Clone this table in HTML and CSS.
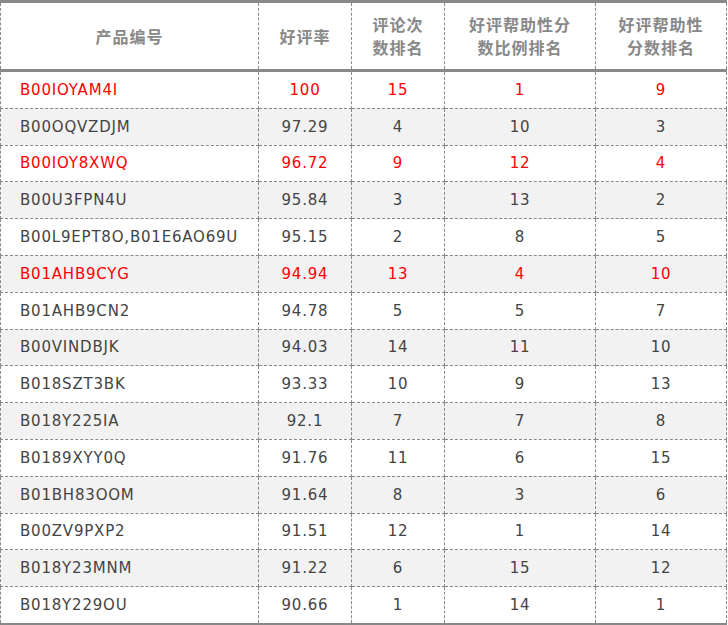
FILE: index.html
```html
<!DOCTYPE html>
<html>
<head>
<meta charset="utf-8">
<link rel="stylesheet" href="styles.css">
</head>
<body>
<table class="rank">
  <colgroup>
    <col class="c1"><col class="c2"><col class="c3"><col class="c4"><col class="c5">
  </colgroup>
  <thead>
    <tr>
      <th>产品编号</th>
      <th>好评率</th>
      <th>评论次<br>数排名</th>
      <th>好评帮助性分<br>数比例排名</th>
      <th>好评帮助性<br>分数排名</th>
    </tr>
  </thead>
  <tbody>
    <tr class="hl"><td>B00IOYAM4I</td><td>100</td><td>15</td><td>1</td><td>9</td></tr>
    <tr><td>B00OQVZDJM</td><td>97.29</td><td>4</td><td>10</td><td>3</td></tr>
    <tr class="hl"><td>B00IOY8XWQ</td><td>96.72</td><td>9</td><td>12</td><td>4</td></tr>
    <tr><td>B00U3FPN4U</td><td>95.84</td><td>3</td><td>13</td><td>2</td></tr>
    <tr><td>B00L9EPT8O,B01E6AO69U</td><td>95.15</td><td>2</td><td>8</td><td>5</td></tr>
    <tr class="hl"><td>B01AHB9CYG</td><td>94.94</td><td>13</td><td>4</td><td>10</td></tr>
    <tr><td>B01AHB9CN2</td><td>94.78</td><td>5</td><td>5</td><td>7</td></tr>
    <tr><td>B00VINDBJK</td><td>94.03</td><td>14</td><td>11</td><td>10</td></tr>
    <tr><td>B018SZT3BK</td><td>93.33</td><td>10</td><td>9</td><td>13</td></tr>
    <tr><td>B018Y225IA</td><td>92.1</td><td>7</td><td>7</td><td>8</td></tr>
    <tr><td>B0189XYY0Q</td><td>91.76</td><td>11</td><td>6</td><td>15</td></tr>
    <tr><td>B01BH83OOM</td><td>91.64</td><td>8</td><td>3</td><td>6</td></tr>
    <tr><td>B00ZV9PXP2</td><td>91.51</td><td>12</td><td>1</td><td>14</td></tr>
    <tr><td>B018Y23MNM</td><td>91.22</td><td>6</td><td>15</td><td>12</td></tr>
    <tr><td>B018Y229OU</td><td>90.66</td><td>1</td><td>14</td><td>1</td></tr>
  </tbody>
</table>
</body>
</html>
```

FILE: styles.css
```css
html, body {
  margin: 0;
  padding: 0;
  background: #fff;
}
.rank {
  border-collapse: collapse;
  table-layout: fixed;
  width: 727px;
  font-family: "DejaVu Sans", "Noto Sans CJK SC", sans-serif;
  color: #444;
  border-top: 3px solid #888;
  border-bottom: 3px solid #888;
  border-left: 1px dashed #888;
  border-right: 1px dashed #888;
}
.c1 { width: 258px; }
.c2 { width: 93px; }
.c3 { width: 93px; }
.c4 { width: 151px; }
.c5 { width: 131px; }
.rank th {
  height: 66px;
  padding: 0;
  font-family: "Noto Sans CJK SC", sans-serif;
  font-weight: bold;
  font-size: 16px;
  letter-spacing: 1px;
  line-height: 23px;
  color: #888;
  text-align: center;
  border-left: 1px dashed #888;
  border-right: 1px dashed #888;
  border-bottom: 3px solid #888;
}
.rank td {
  height: 35.8px;
  padding: 0;
  font-size: 15px;
  letter-spacing: 0.8px;
  text-align: center;
  border: 1px dashed #888;
}
.rank td:first-child {
  text-align: left;
  padding-left: 19px;
}
.rank tbody tr:nth-child(even) td {
  background: #f2f2f2;
}
.rank tr.hl td {
  color: #ff0000;
}
```
